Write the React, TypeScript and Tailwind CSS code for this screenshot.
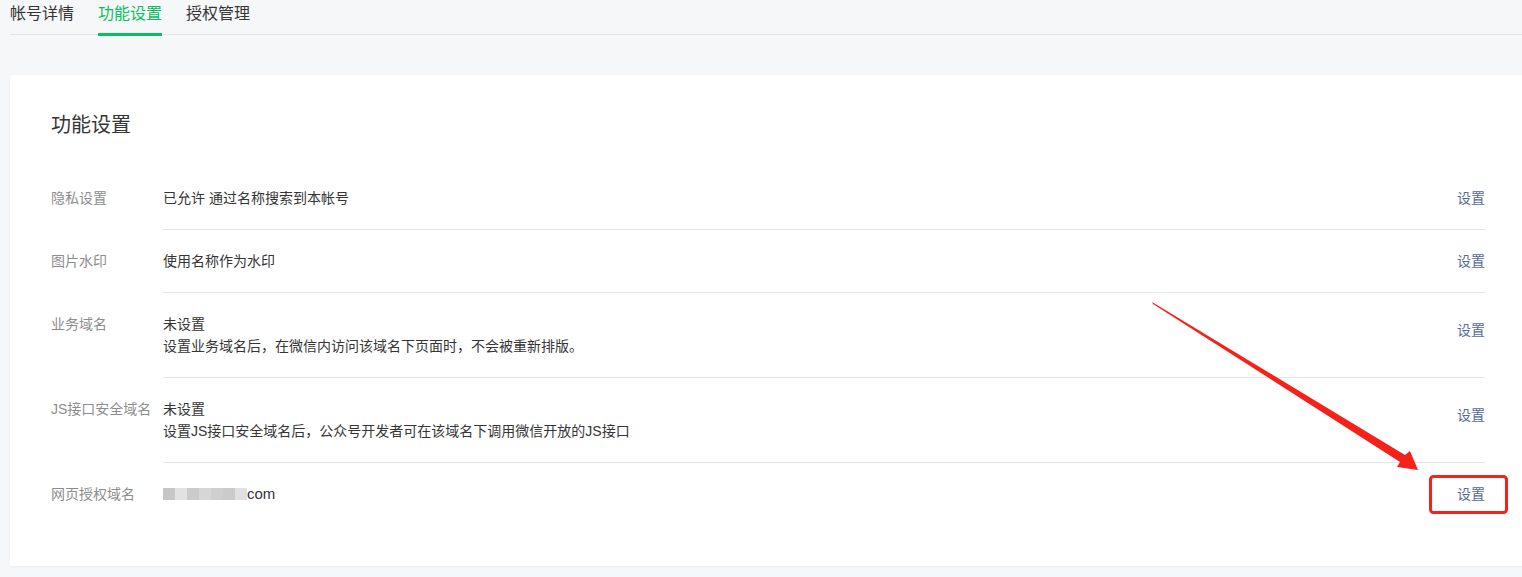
import React from 'react';

const FONT = '"Liberation Sans", "Noto Sans CJK SC", sans-serif';

interface Row {
  label: string;
  lines: React.ReactNode[];
}

const rows: Row[] = [
  { label: '隐私设置', lines: ['已允许 通过名称搜索到本帐号'] },
  { label: '图片水印', lines: ['使用名称作为水印'] },
  { label: '业务域名', lines: ['未设置', '设置业务域名后，在微信内访问该域名下页面时，不会被重新排版。'] },
  { label: 'JS接口安全域名', lines: ['未设置', '设置JS接口安全域名后，公众号开发者可在该域名下调用微信开放的JS接口'] },
  { label: '网页授权域名', lines: [<Redacted key="d" />] },
];

function Redacted() {
  const shades = ['#c6c6c6', '#e2e2e2', '#cbcbcb', '#d6d6d6', '#cfcfcf', '#cbcbcb', '#e0e0e0'];
  return (
    <span className="inline-flex items-center">
      <span className="inline-flex h-[12px]">
        {shades.map((c, i) => (
          <span key={i} className="w-[12px] h-[12px]" style={{ background: c }} />
        ))}
      </span>
      <span className="text-[15px] text-[#353535]">com</span>
    </span>
  );
}

export default function App() {
  return (
    <div className="relative w-[1522px] h-[577px] overflow-hidden bg-[#f6f7f9]" style={{ fontFamily: FONT }}>
      {/* tabs */}
      <div className="ml-[10px] flex gap-6 border-b border-[#e3e5e8]">
        {['帐号详情', '功能设置', '授权管理'].map((t, i) => (
          <div key={t} className={`relative h-[34px] text-[16px] leading-[28px] ${i === 1 ? 'text-[#07c160]' : 'text-[#353535]'}`}>
            {t}
            {i === 1 && <span className="absolute left-0 right-0 bottom-[-2px] h-[3px] bg-[#07c160]" />}
          </div>
        ))}
      </div>

      {/* card */}
      <div className="mt-10 ml-[10px] w-[1516px] bg-white rounded-[2px] shadow-[0_1px_3px_rgba(0,0,0,0.05)] pl-[41px] pr-[41px] pt-[36px] pb-[41px]">
        <div className="text-[20px] leading-[28px] text-[#353535] mb-[28px]">功能设置</div>
        {rows.map((r, i) => (
          <div key={r.label} className="flex">
            <div className="w-[112px] shrink-0 py-5 text-[14px] leading-[22px] text-[#8d8d8d] whitespace-nowrap">{r.label}</div>
            <div className={`flex-1 flex items-center py-5 ${i < rows.length - 1 ? 'border-b border-[#e7e7eb]' : ''}`}>
              <div className="flex-1 text-[14px] leading-[22px] text-[#353535]">
                {r.lines.map((l, j) => (
                  <div key={j} className="h-[22px] flex items-center">{l}</div>
                ))}
              </div>
              <a className={`text-[14px] leading-[22px] text-[#576b95] cursor-pointer ${r.lines.length > 1 ? 'mb-[10px]' : ''}`}>设置</a>
            </div>
          </div>
        ))}
      </div>

      {/* annotation overlay */}
      <svg className="absolute left-0 top-0 pointer-events-none" width="1522" height="577">
        <polygon points="1152,302 1153,304 1400,462 1397,467 1418,470 1410,451 1405,455" fill="#f5221b" />
        <rect x="1430.5" y="476.5" width="76" height="36" rx="3" fill="none" stroke="#f5221b" strokeWidth="3" />
      </svg>
    </div>
  );
}
